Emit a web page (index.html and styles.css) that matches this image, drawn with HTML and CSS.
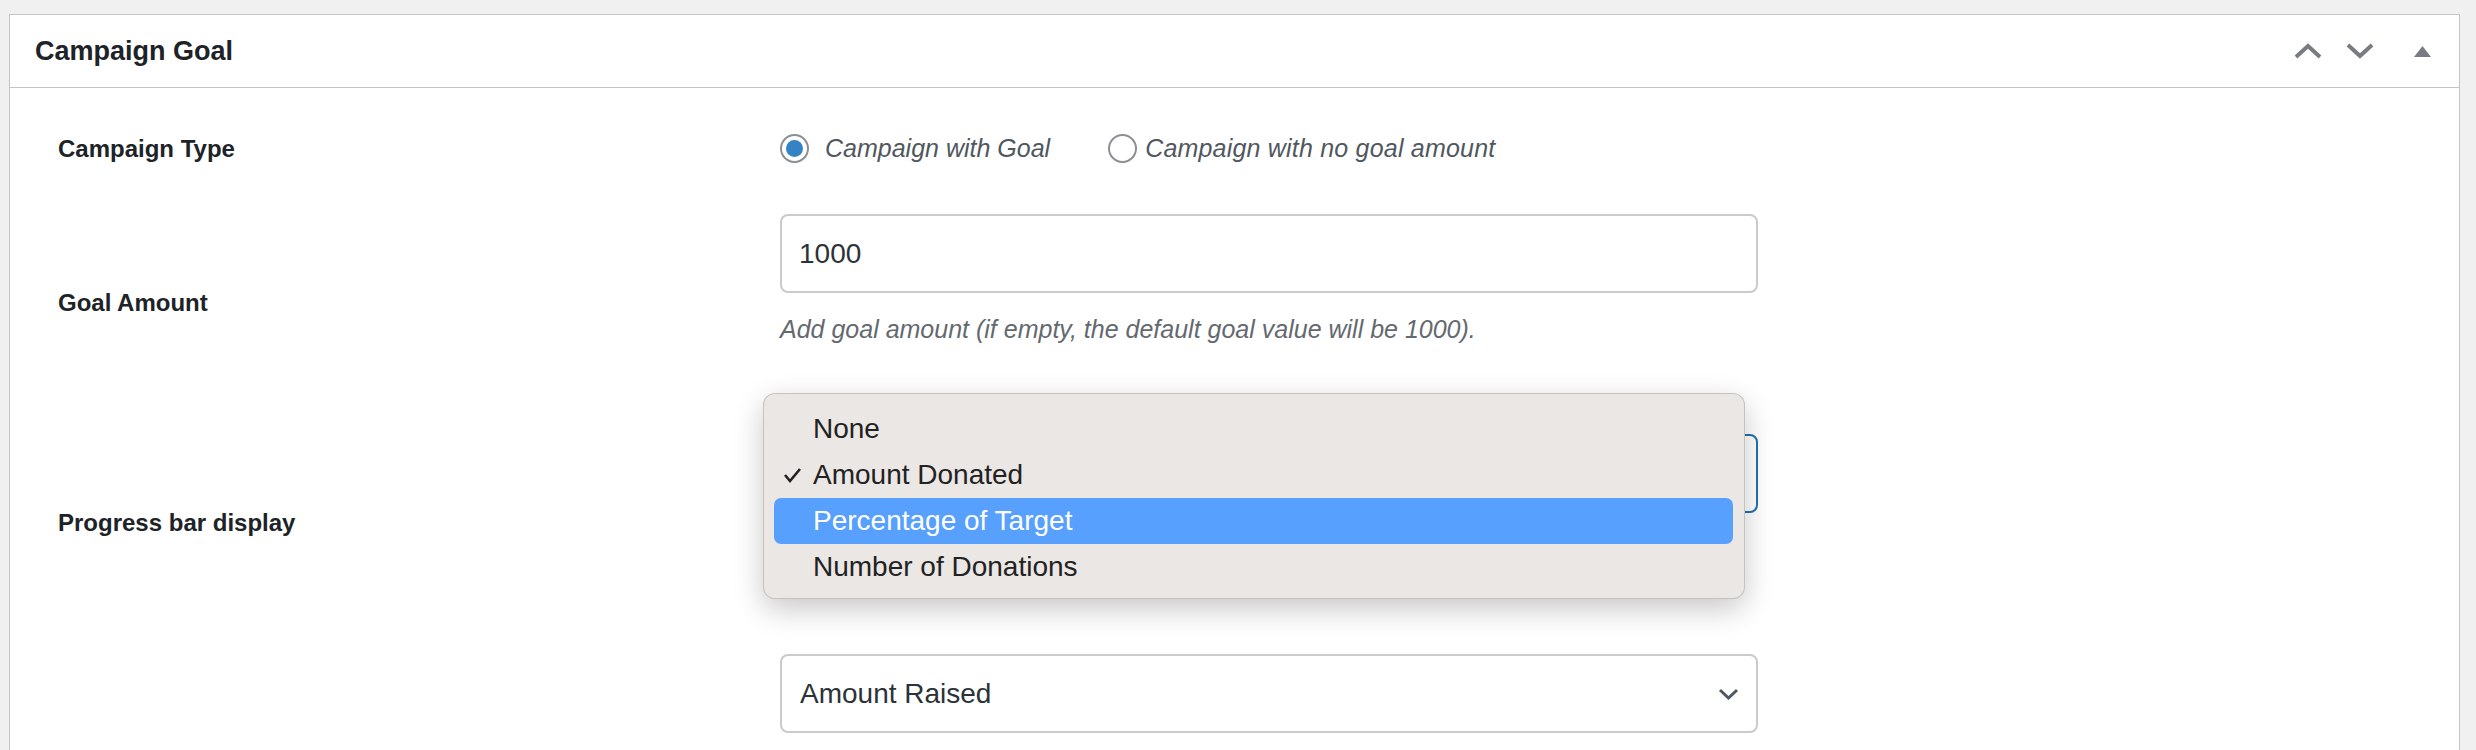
FILE: index.html
```html
<!DOCTYPE html>
<html lang="en">
<head>
    <meta charset="UTF-8">
    <meta name="viewport" content="width=device-width, initial-scale=1.0">
    <title>Campaign Goal</title>
    <link rel="stylesheet" href="styles.css">
</head>
<body>
    <div class="postbox">
        <div class="postbox-header">
            <h2 class="postbox-title">Campaign Goal</h2>
            <div class="handle-actions">
                <button class="handle-btn" aria-label="Move up">
                    <svg width="28" height="16" viewBox="0 0 28 16"><polyline points="2,14 14,3 26,14" fill="none" stroke="#787c82" stroke-width="4"/></svg>
                </button>
                <button class="handle-btn" aria-label="Move down">
                    <svg width="28" height="16" viewBox="0 0 28 16"><polyline points="2,2 14,13 26,2" fill="none" stroke="#787c82" stroke-width="4"/></svg>
                </button>
                <button class="handle-btn toggle-btn" aria-label="Toggle panel">
                    <svg width="17" height="11" viewBox="0 0 17 11"><polygon points="8.5,0 17,11 0,11" fill="#787c82"/></svg>
                </button>
            </div>
        </div>

        <div class="inside">
            <div class="field-row first-row">
                <div class="field-label">Campaign Type</div>
                <div class="field-value radio-group">
                    <label class="radio-option">
                        <span class="radio checked"></span>
                        <span class="radio-text">Campaign with Goal</span>
                    </label>
                    <label class="radio-option second">
                        <span class="radio"></span>
                        <span class="radio-text">Campaign with no goal amount</span>
                    </label>
                </div>
            </div>

            <div class="field-row">
                <div class="field-label">Goal Amount</div>
                <div class="field-value">
                    <div class="text-input">1000</div>
                    <p class="description">Add goal amount (if empty, the default goal value will be 1000).</p>
                </div>
            </div>

            <div class="field-row">
                <div class="field-label">Progress bar display</div>
                <div class="field-value">
                    <div class="select-wrap">
                        <div class="select-box focused"></div>
                        <div class="select-menu">
                            <div class="menu-item">None</div>
                            <div class="menu-item">
                                <svg class="check" width="19" height="16" viewBox="0 0 19 16"><polyline points="2,8 7,14 17,2" fill="none" stroke="#222" stroke-width="2.6"/></svg>
                                Amount Donated
                            </div>
                            <div class="menu-item active">Percentage of Target</div>
                            <div class="menu-item">Number of Donations</div>
                        </div>
                    </div>
                </div>
            </div>

            <div class="field-row last-row">
                <div class="field-label"></div>
                <div class="field-value">
                    <div class="select-box">
                        Amount Raised
                        <svg width="21" height="12" viewBox="0 0 21 12"><polyline points="2,2 10.5,10 19,2" fill="none" stroke="#50575e" stroke-width="3"/></svg>
                    </div>
                </div>
            </div>
        </div>
    </div>
</body>
</html>
```

FILE: styles.css
```css
body{
    margin: 0;
    padding: 14px 16px 0 9px;
    background-color: #f0f0f1;
    font-family: "Liberation Sans", Arial, sans-serif;
    color: #1d2327;
}
.postbox{
    background-color: #fff;
    border: 1px solid #c3c4c7;
}
.postbox-header{
    display: flex;
    align-items: center;
    justify-content: space-between;
    height: 72px;
    border-bottom: 1px solid #c3c4c7;
}
.postbox-title{
    margin: 0;
    padding-left: 25px;
    font-size: 27px;
    font-weight: bold;
}
.handle-actions{
    display: flex;
    height: 100%;
}
.handle-btn{
    display: flex;
    align-items: center;
    justify-content: center;
    width: 52px;
    height: 100%;
    padding: 0;
    border: none;
    background: none;
}
.toggle-btn{
    width: 73px;
}
.inside{
    padding: 16px 0 0 48px;
}
.field-row{
    display: grid;
    grid-template-columns: 722px 978px;
    align-items: center;
    min-height: 220px;
}
.first-row{
    min-height: 89px;
}
.last-row{
    min-height: 160px;
}
.field-label{
    font-size: 24px;
    font-weight: bold;
    color: #1d2327;
}
.field-value{
    align-self: start;
    padding-top: 21px;
}
.radio-group{
    align-self: center;
    padding-top: 0;
    display: flex;
    align-items: center;
}
.radio-option{
    display: flex;
    align-items: center;
}
.radio-option.second{
    margin-left: 58px;
}
.radio{
    width: 29px;
    height: 29px;
    box-sizing: border-box;
    border: 2px solid #8c8f94;
    border-radius: 50%;
    display: flex;
    align-items: center;
    justify-content: center;
}
.radio.checked::after{
    content: "";
    width: 17px;
    height: 17px;
    border-radius: 50%;
    background-color: #3582c4;
}
.radio-text{
    margin-left: 16px;
    font-size: 25px;
    font-style: italic;
    color: #50575e;
}
.second .radio-text{
    margin-left: 8px;
    letter-spacing: 0.2px;
}
.text-input{
    height: 79px;
    box-sizing: border-box;
    border: 2px solid #cbcbcb;
    border-radius: 8px;
    padding-left: 17px;
    display: flex;
    align-items: center;
    font-size: 28px;
    color: #2c3338;
}
.description{
    margin: 19px 0 0 0;
    font-size: 25px;
    line-height: 35px;
    font-style: italic;
    color: #646970;
}
.select-wrap{
    position: relative;
}
.select-box{
    height: 79px;
    box-sizing: border-box;
    border: 2px solid #cbcbcb;
    border-radius: 8px;
    padding: 0 17px 0 18px;
    display: flex;
    align-items: center;
    justify-content: space-between;
    font-size: 28px;
    color: #2c3338;
}
.select-box.focused{
    border-color: #2271b1;
}
.select-menu{
    position: absolute;
    left: -17px;
    top: -41px;
    width: 982px;
    box-sizing: border-box;
    padding: 12px 11px 8px 10px;
    background-color: #ebe7e4;
    border: 1px solid rgba(0,0,0,0.16);
    border-radius: 12px;
    box-shadow: 0 10px 30px rgba(0,0,0,0.22);
}
.menu-item{
    position: relative;
    height: 46px;
    display: flex;
    align-items: center;
    padding-left: 39px;
    border-radius: 7px;
    font-size: 28px;
    color: #222;
}
.menu-item.active{
    background-color: #58a0fd;
    color: #fff;
}
.check{
    position: absolute;
    left: 9px;
    top: 15px;
}
```
